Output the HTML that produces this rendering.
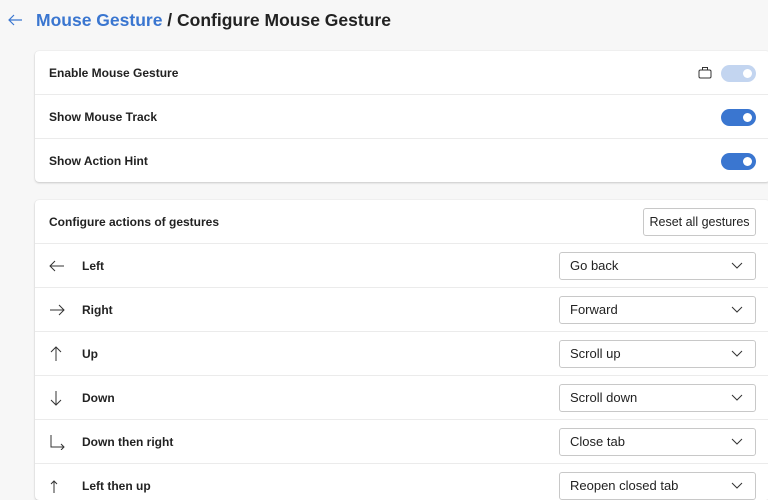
<!DOCTYPE html>
<html><head><style>
*{box-sizing:border-box;margin:0;padding:0}
body{width:768px;height:488px;overflow:hidden;background:#f7f7f7;font-family:"Liberation Sans",sans-serif;color:#1b1b1b;position:relative}
.title{position:absolute;left:36px;top:10px;font-size:17.5px;font-weight:bold;color:#222;white-space:nowrap}
.title span{color:#3a76d0}
.back{position:absolute;left:7px;top:12px}
.card{position:absolute;left:35px;width:735px;background:#fff;border-radius:4px;box-shadow:0 1px 2px rgba(0,0,0,.18),0 0 1px rgba(0,0,0,.12);overflow:hidden}
.row{height:44px;border-bottom:1px solid #ebebeb;position:relative;display:flex;align-items:center;padding-left:14px;font-size:12px;font-weight:bold;color:#222}
.row:last-child{border-bottom:none}
.tog{position:absolute;right:14px;top:14px;width:35px;height:17px;border-radius:9px;background:#3a76d0}
.tog::after{content:"";position:absolute;right:4px;top:4px;width:9px;height:9px;border-radius:50%;background:#fff}
.tog.dis{background:#c3d5f0}
.icon{width:20px;margin-right:13px;display:flex}
.sel{position:absolute;right:14px;top:8px;width:197px;height:28px;border:1px solid #c8c8c8;border-radius:3px;font-weight:400;font-size:13px;padding-left:10px;line-height:26px;color:#222}
.sel svg{position:absolute;right:12px;top:9px}
.btn{position:absolute;right:14px;top:8px;height:28px;width:113px;border:1px solid #c8c8c8;border-radius:3px;font-weight:400;font-size:12.5px;text-align:center;line-height:26px}
</style></head><body>
<svg class="back" width="16" height="16" viewBox="0 0 16 16"><path d="M15 8H2M7 3L2 8l5 5" stroke="#3a76d0" stroke-width="1.2" fill="none"/></svg>
<div class="title"><span>Mouse Gesture</span> / Configure Mouse Gesture</div>
<div class="card" style="top:51px;height:131px">
<div class="row">Enable Mouse Gesture
<svg style="position:absolute;right:58px;top:15px" width="14" height="13" viewBox="0 0 14 13"><rect x="1" y="4" width="12" height="8" rx="1.5" stroke="#333" fill="none"/><path d="M4.5 4V1.5h5V4" stroke="#333" fill="none"/></svg>
<div class="tog dis"></div></div>
<div class="row">Show Mouse Track<div class="tog"></div></div>
<div class="row">Show Action Hint<div class="tog"></div></div>
</div>
<div class="card" style="top:200px;height:300px">
<div class="row">Configure actions of gestures<div class="btn">Reset all gestures</div></div>
<div class="row"><span class="icon"><svg width="16" height="14" viewBox="0 0 16 14"><path d="M15 7H1M6 2L1 7l5 5" stroke="#333" fill="none"/></svg></span>Left<div class="sel">Go back<svg width="12" height="8" viewBox="0 0 12 8"><path d="M1 1l5 5 5-5" stroke="#333" fill="none"/></svg></div></div>
<div class="row"><span class="icon"><svg width="16" height="14" viewBox="0 0 16 14"><path d="M1 7h14M10 2l5 5-5 5" stroke="#333" fill="none"/></svg></span>Right<div class="sel">Forward<svg width="12" height="8" viewBox="0 0 12 8"><path d="M1 1l5 5 5-5" stroke="#333" fill="none"/></svg></div></div>
<div class="row"><span class="icon"><svg width="16" height="16" viewBox="0 0 16 16"><path d="M7 15V1M2 6l5-5 5 5" stroke="#333" fill="none"/></svg></span>Up<div class="sel">Scroll up<svg width="12" height="8" viewBox="0 0 12 8"><path d="M1 1l5 5 5-5" stroke="#333" fill="none"/></svg></div></div>
<div class="row"><span class="icon"><svg width="16" height="16" viewBox="0 0 16 16"><path d="M7 1v14M2 10l5 5 5-5" stroke="#333" fill="none"/></svg></span>Down<div class="sel">Scroll down<svg width="12" height="8" viewBox="0 0 12 8"><path d="M1 1l5 5 5-5" stroke="#333" fill="none"/></svg></div></div>
<div class="row"><span class="icon"><svg width="16" height="16" viewBox="0 0 16 16"><path d="M2 1v12h13M12 10l3 3-3 3" stroke="#333" fill="none"/></svg></span>Down then right<div class="sel">Close tab<svg width="12" height="8" viewBox="0 0 12 8"><path d="M1 1l5 5 5-5" stroke="#333" fill="none"/></svg></div></div>
<div class="row"><span class="icon"><svg width="16" height="16" viewBox="0 0 16 16"><path d="M5 15V3M2 6l3-3 3 3" stroke="#333" fill="none"/></svg></span>Left then up<div class="sel">Reopen closed tab<svg width="12" height="8" viewBox="0 0 12 8"><path d="M1 1l5 5 5-5" stroke="#333" fill="none"/></svg></div></div>
</div>
</body></html>
